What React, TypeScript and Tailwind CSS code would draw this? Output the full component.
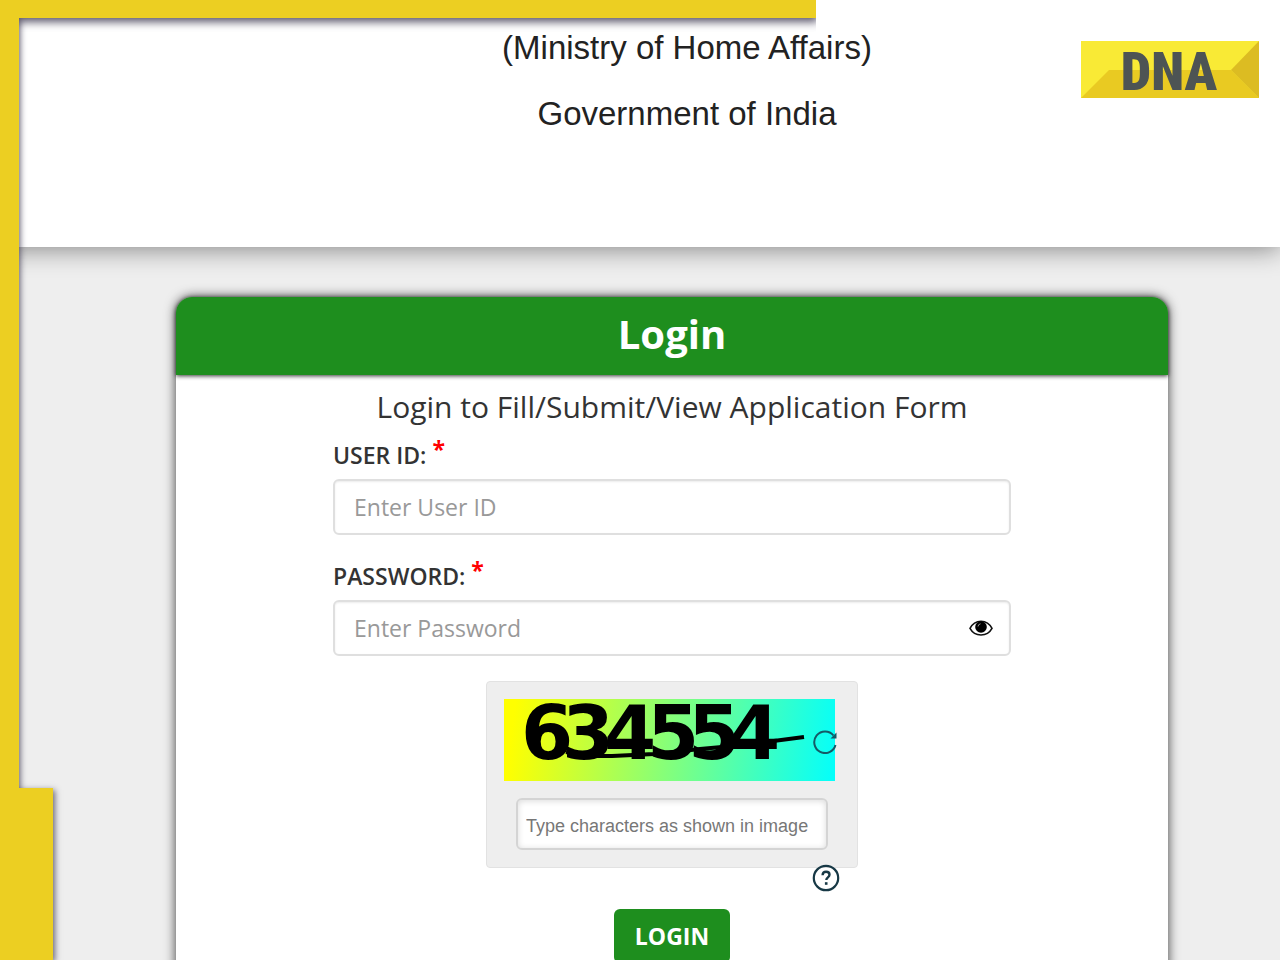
import { useState } from 'react';

interface FieldProps {
  id: string;
  label: string;
  placeholder: string;
  type?: string;
  children?: React.ReactNode;
}

function Field({ id, label, placeholder, type = 'text', children }: FieldProps) {
  return (
    <div className="flex flex-col gap-2">
      <label
        htmlFor={id}
        className="flex items-start gap-[6px] text-[23px] leading-8 font-semibold text-[#333]"
      >
        {label}
        <span className="leading-5 font-bold text-[#f00]">*</span>
      </label>
      <div className="relative">
        <input
          id={id}
          type={type}
          placeholder={placeholder}
          className="block h-14 w-full rounded-md border-2 border-[#dfdfdf] bg-white px-[19px] text-[23px] text-[#333] shadow-[inset_0_1px_2px_rgba(0,0,0,0.08)] placeholder:text-[#999]"
        />
        {children}
      </div>
    </div>
  );
}

function EyeIcon() {
  return (
    <svg viewBox="0 0 24 16" className="h-4 w-6" aria-hidden="true">
      <path
        d="M1 8.4C3.2 4 7.2 1.2 12 1.2S20.8 4 23 8.4C20.8 12.4 16.8 15 12 15S3.2 12.4 1 8.4Z"
        fill="#fff"
        stroke="#111"
        strokeWidth="1.6"
      />
      <circle cx="12" cy="7" r="5.8" fill="#000" />
      <path d="M9 6.5a3 3 0 0 1 2.5-2.7" fill="none" stroke="#999" strokeWidth="1" />
    </svg>
  );
}

function Logo() {
  return (
    <svg
      viewBox="0 0 178 57"
      className="h-[57px] w-[178px] overflow-visible"
      role="img"
      aria-label="DNA"
    >
      <rect width="178" height="57" fill="#f9ea35" />
      <path d="M0 57 28 29H150L178 57Z" fill="#e9ca22" />
      <path d="M178 0V57L150 29Z" fill="#dcbc22" />
      <text
        x="88"
        y="49"
        textAnchor="middle"
        fontSize="54"
        fontWeight="900"
        fill="#4d5454"
        style={{ fontFamily: '"Roboto Condensed", "Open Sans Condensed", Roboto, sans-serif' }}
      >
        DNA
      </text>
    </svg>
  );
}

function CaptchaImage() {
  return (
    <svg viewBox="0 0 331 82" className="h-[82px] w-[331px] overflow-visible">
      <defs>
        <linearGradient id="captcha-bg" gradientUnits="userSpaceOnUse" x1="12" y1="0" x2="340" y2="45">
          <stop offset="0" stopColor="#ffff00" />
          <stop offset="1" stopColor="#00ffff" />
        </linearGradient>
      </defs>
      <rect width="331" height="82" fill="url(#captcha-bg)" />
      <text
        x="17 58 100 143 184 224"
        y="60"
        fontSize="75"
        fontWeight="700"
        style={{ fontFamily: '"DejaVu Sans", sans-serif' }}
      >
        634554
      </text>
      <path d="M62 53 80 57 108 57 150 55 196 50 240 46 300 38" fill="none" stroke="#000" strokeWidth="4" />
    </svg>
  );
}

function Captcha() {
  return (
    <div className="flex w-[372px] flex-col gap-[17px] rounded-sm border border-[#e2e2e2] bg-[#eee] p-[17px]">
      <div className="relative">
        <CaptchaImage />
        <button type="button" aria-label="Refresh" className="absolute top-[31px] left-[309px]">
          <svg viewBox="0 0 24 24" className="size-6" fill="none" aria-hidden="true">
            <path d="M20.5 5.5A10.8 10.8 0 1 0 22.5 15" stroke="#155a66" strokeWidth="2" />
            <path d="M23.5 2.5V8.5H17.5Z" fill="#155a66" />
          </svg>
        </button>
      </div>
      <input
        type="text"
        aria-label="Type characters as shown in image"
        placeholder="Type characters as shown in image"
        className="mx-3 h-[52px] rounded-md border-2 border-[#d4d4d4] bg-white px-2 pt-1 font-['Liberation_Sans',sans-serif] text-lg shadow-[inset_0_1px_6px_rgba(0,0,0,0.15)] placeholder:text-[#777]"
      />
    </div>
  );
}

function LoginForm() {
  const [showPassword, setShowPassword] = useState(false);

  return (
    <form
      className="mx-auto flex w-full max-w-[678px] flex-col gap-[25px] pt-[10px]"
      onSubmit={(e) => e.preventDefault()}
    >
      <Field id="user-id" label="USER ID:" placeholder="Enter User ID" />
      <Field
        id="password"
        label="PASSWORD:"
        placeholder="Enter Password"
        type={showPassword ? 'text' : 'password'}
      >
        <button
          type="button"
          aria-label="Show password"
          onClick={() => setShowPassword(!showPassword)}
          className="absolute inset-y-0 right-[18px] flex items-center"
        >
          <EyeIcon />
        </button>
      </Field>
      <div className="flex flex-col items-center">
        <Captcha />
        <div className="-mt-1 flex w-[372px] justify-end pr-[18px]">
          <button type="button" aria-label="Help">
            <svg viewBox="0 0 28 28" className="size-7" fill="none" stroke="#173845" aria-hidden="true">
              <circle cx="14" cy="14" r="12.2" strokeWidth="2.2" />
              <path d="M10.6 11.3c0-2.2 1.4-3.5 3.5-3.5s3.4 1.2 3.4 3c0 2.6-3.2 2.5-3.2 5.2" strokeWidth="2.4" />
              <path d="M14.2 18.2v2.6" strokeWidth="2.6" />
            </svg>
          </button>
        </div>
        <button
          type="submit"
          className="mt-[17px] h-[54px] rounded-md bg-[#1e8e1e] px-[21px] text-[23px] font-bold text-white"
        >
          LOGIN
        </button>
      </div>
    </form>
  );
}

// Yellow border running along the top and left edges, over the page
function Frame() {
  return (
    <div className="pointer-events-none absolute inset-0">
      <div className="absolute top-0 left-0 h-8 w-[816px] overflow-hidden">
        <div className="h-[18px] bg-[#eccf22] shadow-[0_2px_8px_2px_rgba(50,45,70,0.8)]" />
      </div>
      <div className="absolute top-[18px] bottom-0 left-0 w-20 overflow-hidden">
        <div className="h-full w-[19px] bg-[#eccf22] shadow-[1px_0_6px_rgba(50,45,70,0.8)]" />
      </div>
      <div className="absolute top-[788px] bottom-0 left-0 w-[53px] bg-[#eccf22] shadow-[2px_2px_6px_rgba(50,45,70,0.7)]" />
      <div className="absolute top-0 left-0 h-full w-[19px] bg-[#eccf22]" />
    </div>
  );
}

export default function App() {
  return (
    <div className="relative h-screen overflow-hidden bg-[#eee] font-['Open_Sans',sans-serif]">
      <header className="relative bg-white pt-[15px] pb-[100px] pl-[94px] text-center font-['Liberation_Sans',sans-serif] text-[33px] leading-[66px] text-[#222] shadow-[0_2px_24px_rgba(0,0,0,0.45)]">
        <p>(Ministry of Home Affairs)</p>
        <p>Government of India</p>
        <div className="absolute top-[41px] right-[21px]">
          <Logo />
        </div>
      </header>

      <main className="pt-[50px] pl-16">
        <section className="mx-auto w-full max-w-[992px] rounded-t-2xl bg-white pb-12 shadow-[0_0_12px_rgba(0,0,0,0.75)]">
          <h1 className="rounded-t-2xl bg-[#1e8e1e] pb-1 text-center text-[40px] leading-[74px] font-bold text-white shadow-[0_1px_4px_rgba(0,0,0,0.8)]">
            Login
          </h1>
          <p className="pt-[10px] text-center text-[30px] leading-[44px] text-[#333]">
            Login to Fill/Submit/View Application Form
          </p>
          <LoginForm />
        </section>
      </main>

      <Frame />
    </div>
  );
}
